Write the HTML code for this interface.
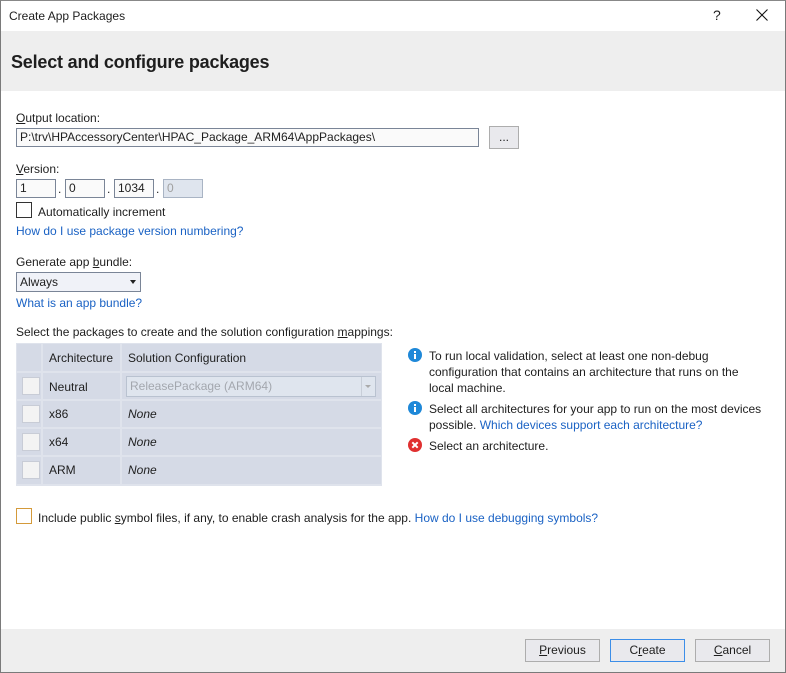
<!DOCTYPE html>
<html><head><meta charset="utf-8"><style>
*{margin:0;padding:0;box-sizing:border-box}
body{width:786px;height:673px;background:#fff;font-family:"Liberation Sans",sans-serif;font-size:12px;color:#1e1e1e;position:relative;overflow:hidden}
.a{position:absolute;white-space:nowrap}
.lnk{color:#1a62c4}
.inp{position:absolute;border:1px solid #7a8597;background:#fafafa;height:19px;line-height:17px;padding-left:3px}
.cb{position:absolute;width:16px;height:16px;border:1px solid #333;background:#fff}
.btn{position:absolute;height:23px;border:1px solid #adadad;background:#e9e9ed;text-align:center;line-height:21px}
u{text-decoration:underline}
.tb{position:absolute;left:16px;top:343px;width:366px;height:143px;background:#dfe3ec}
.c{position:absolute;background:#d5dae6;line-height:26px;padding-left:6px}
.ck{position:absolute;width:18px;height:18px;background:#f3f3f3;border:1px solid #c8ccd6}
i{font-style:italic}
</style></head><body>
<div style="position:absolute;left:0;top:0;width:786px;height:673px;border:1px solid #7a7a7a;border-top-color:#888"></div>
<div class="a" style="left:9px;top:9px;font-size:12px">Create App Packages</div>
<div class="a" style="left:713px;top:7px;font-size:14px">?</div>
<svg class="a" style="left:756px;top:9px" width="12" height="12"><path d="M0.5 0.5L11.5 11.5M11.5 0.5L0.5 11.5" stroke="#111" stroke-width="1.1"/></svg>
<div style="position:absolute;left:1px;top:31px;width:784px;height:60px;background:#eeeeee"></div>
<div class="a" style="left:11px;top:52px;font-size:18px;font-weight:bold;color:#1e1e1e;letter-spacing:-0.2px">Select and configure packages</div>

<div class="a" style="left:16px;top:111px"><u>O</u>utput location:</div>
<div class="inp" style="left:16px;top:128px;width:463px">P:\trv\HPAccessoryCenter\HPAC_Package_ARM64\AppPackages\</div>
<div class="btn" style="left:489px;top:126px;width:30px;height:23px">...</div>

<div class="a" style="left:16px;top:162px"><u>V</u>ersion:</div>
<div class="inp" style="left:16px;top:179px;width:40px">1</div>
<div class="a" style="left:58px;top:182px">.</div>
<div class="inp" style="left:65px;top:179px;width:40px">0</div>
<div class="a" style="left:107px;top:182px">.</div>
<div class="inp" style="left:114px;top:179px;width:40px">1034</div>
<div class="a" style="left:156px;top:182px">.</div>
<div class="inp" style="left:163px;top:179px;width:40px;background:#dfe5ee;border-color:#a9b4c4;color:#a0a0a0">0</div>
<div class="cb" style="left:16px;top:202px"></div>
<div class="a" style="left:38px;top:205px">Automatically increment</div>
<div class="a lnk" style="left:16px;top:224px">How do I use package version numbering?</div>

<div class="a" style="left:16px;top:255px">Generate app <u>b</u>undle:</div>
<div class="inp" style="left:16px;top:272px;width:125px;height:20px;background:#f0f2f8;line-height:18px">Always<span style="position:absolute;right:4px;top:7px;width:0;height:0;border-left:3.5px solid transparent;border-right:3.5px solid transparent;border-top:4px solid #222"></span></div>
<div class="a lnk" style="left:16px;top:296px">What is an app bundle?</div>

<div class="a" style="left:16px;top:325px">Select the packages to create and the solution configuration <u>m</u>appings:</div>
<div class="tb">
<div class="c" style="left:1px;top:1px;width:24px;height:27px"></div>
<div class="c" style="left:27px;top:1px;width:77px;height:27px;line-height:28px">Architecture</div>
<div class="c" style="left:106px;top:1px;width:259px;height:27px;line-height:28px">Solution Configuration</div>

<div class="c" style="left:1px;top:30px;width:24px;height:26px"></div><div class="ck" style="left:6px;top:34px"></div>
<div class="c" style="left:27px;top:30px;width:77px;height:26px;line-height:28px">Neutral</div>
<div class="c" style="left:106px;top:30px;width:259px;height:26px"></div>
<div class="a" style="left:110px;top:33px;width:250px;height:21px;background:#dfe5ee;border:1px solid #b9c2d0;color:#a3a7ae;line-height:19px;padding-left:3px">ReleasePackage (ARM64)<span style="position:absolute;right:0;top:0;width:14px;height:19px;border-left:1px solid #c8ced8"></span><span style="position:absolute;right:4px;top:8px;border-left:3px solid transparent;border-right:3px solid transparent;border-top:3px solid #aaa"></span></div>

<div class="c" style="left:1px;top:58px;width:24px;height:26px"></div><div class="ck" style="left:6px;top:62px"></div>
<div class="c" style="left:27px;top:58px;width:77px;height:26px">x86</div>
<div class="c" style="left:106px;top:58px;width:259px;height:26px"><i>None</i></div>

<div class="c" style="left:1px;top:86px;width:24px;height:26px"></div><div class="ck" style="left:6px;top:90px"></div>
<div class="c" style="left:27px;top:86px;width:77px;height:26px">x64</div>
<div class="c" style="left:106px;top:86px;width:259px;height:26px"><i>None</i></div>

<div class="c" style="left:1px;top:114px;width:24px;height:27px"></div><div class="ck" style="left:6px;top:118px"></div>
<div class="c" style="left:27px;top:114px;width:77px;height:27px">ARM</div>
<div class="c" style="left:106px;top:114px;width:259px;height:27px"><i>None</i></div>
</div>

<svg class="a" style="left:408px;top:348px" width="14" height="14"><circle cx="7" cy="7" r="7" fill="#1e88d8"/><rect x="6" y="6" width="2" height="5" fill="#fff"/><rect x="6" y="3" width="2" height="2" fill="#fff"/></svg>
<div class="a" style="left:429px;top:348px;line-height:16px">To run local validation, select at least one non-debug<br>configuration that contains an architecture that runs on the<br>local machine.</div>
<svg class="a" style="left:408px;top:401px" width="14" height="14"><circle cx="7" cy="7" r="7" fill="#1e88d8"/><rect x="6" y="6" width="2" height="5" fill="#fff"/><rect x="6" y="3" width="2" height="2" fill="#fff"/></svg>
<div class="a" style="left:429px;top:401px;line-height:16px">Select all architectures for your app to run on the most devices<br>possible. <span class="lnk">Which devices support each architecture?</span></div>
<svg class="a" style="left:408px;top:438px" width="14" height="14"><circle cx="7" cy="7" r="7" fill="#e03030"/><path d="M4.3 4.3L9.7 9.7M9.7 4.3L4.3 9.7" stroke="#fff" stroke-width="2"/></svg>
<div class="a" style="left:429px;top:439px">Select an architecture.</div>

<div class="cb" style="left:16px;top:508px;border-color:#d49a3a"></div>
<div class="a" style="left:38px;top:511px">Include public <u>s</u>ymbol files, if any, to enable crash analysis for the app. <span class="lnk">How do I use debugging symbols?</span></div>

<div style="position:absolute;left:1px;top:629px;width:784px;height:43px;background:#eeeeee"></div>
<div class="btn" style="left:525px;top:639px;width:75px"><u>P</u>revious</div>
<div class="btn" style="left:610px;top:639px;width:75px;border-color:#3c8ee8">C<u>r</u>eate</div>
<div class="btn" style="left:695px;top:639px;width:75px"><u>C</u>ancel</div>
</body></html>
